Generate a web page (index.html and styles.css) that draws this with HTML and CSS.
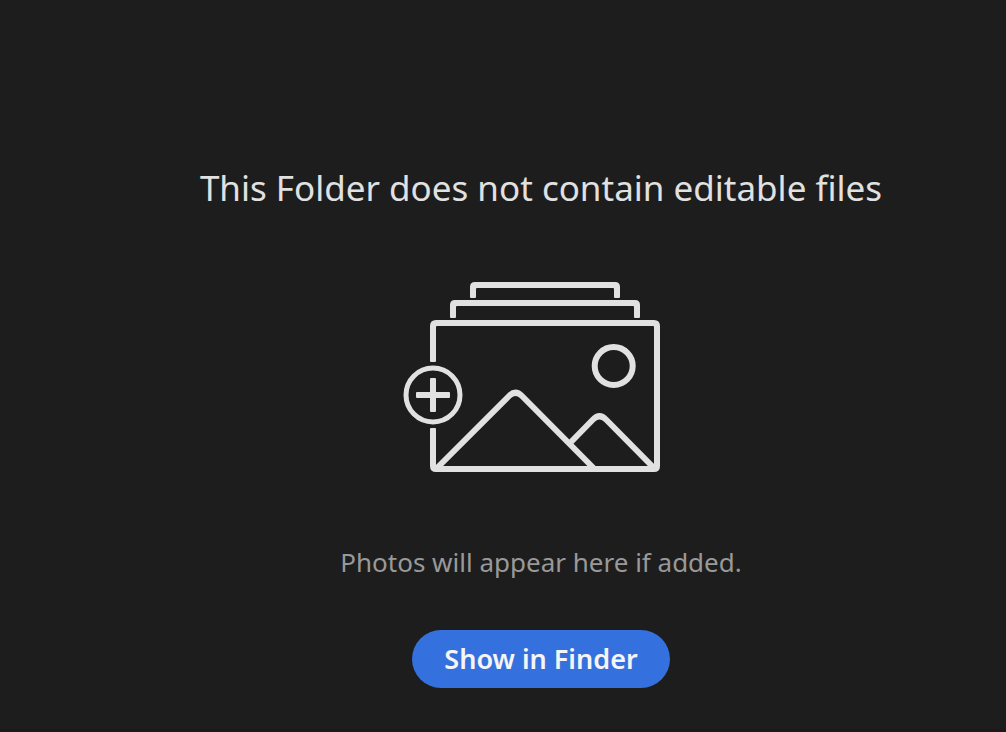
FILE: index.html
```html
<!DOCTYPE html>
<html lang="en">
<head>
    <meta charset="UTF-8">
    <meta name="viewport" content="width=device-width, initial-scale=1.0">
    <title>Empty folder</title>
    <link rel="stylesheet" href="styles.css">
</head>
<body>

<main class="empty-state">
    <h1 class="title">This Folder does not contain editable files</h1>

    <svg class="picture" viewBox="0 0 282 194" aria-hidden="true">
        <!-- stacked photos -->
        <path class="solid" d="M70 17V7q0-5 5-5h140q5 0 5 5v10q0 1-1 1h-4q-1 0-1-1V9q0-1-1-1H77q-1 0-1 1v8q0 1-1 1h-4q-1 0-1-1z"/>
        <path class="solid" d="M50 37V25q0-5 5-5h180q5 0 5 5v12q0 1-1 1h-4q-1 0-1-1V27q0-1-1-1H57q-1 0-1 1v10q0 1-1 1h-4q-1 0-1-1z"/>
        <path class="solid" d="M30 81V46q0-6 6-6h218q6 0 6 6v140q0 6-6 6H36q-6 0-6-6v-37q0-1 1-1h4q1 0 1 1v37h218V47q0-1-1-1H37q-1 0-1 1v34q0 1-1 1h-4q-1 0-1-1z"/>
        <!-- mountains and sun -->
        <path class="line" d="M36.500 188.500L109 116q6.500-6.500 13 0L194 188.500"/>
        <path class="line" d="M171 162L193 139.500q6.500-6.500 13 0L254 188"/>
        <circle class="line" cx="213.700" cy="86" r="19"/>
        <!-- add badge -->
        <circle class="line thin" cx="33" cy="115" r="27"/>
        <rect class="solid" x="16" y="112" width="34" height="6" rx="1"/>
        <rect class="solid" x="30" y="98" width="6" height="34" rx="1"/>
    </svg>

    <p class="hint">Photos will appear here if added.</p>

    <button class="finder-button" type="button">Show in Finder</button>
</main>

</body>
</html>
```

FILE: styles.css
```css
* {
    box-sizing: border-box;
}
body {
    margin: 0;
    background-color: #1d1d1d;
    color: #e1e1e1;
    font-family: "Noto Sans", sans-serif;
}
.empty-state {
    display: flex;
    flex-direction: column;
    align-items: center;
    min-height: 100vh;
    padding: 164px 0 40px 76px;
    border-bottom: 3px solid #1e181c;
}
.title {
    margin: 0;
    font-size: 35px;
    font-weight: 400;
    line-height: 48px;
}
.picture {
    width: 282px;
    height: 194px;
    margin-top: 68px;
}
.solid {
    fill: #e1e1e1;
}
.line {
    fill: none;
    stroke: #e1e1e1;
    stroke-width: 6;
}
.thin {
    stroke-width: 5;
}
.hint {
    margin: 68px 0 0;
    color: #999;
    font-size: 26px;
    line-height: 40px;
}
.finder-button {
    height: 58px;
    margin-top: 48px;
    padding: 0 32px 2px;
    border: none;
    border-radius: 29px;
    background-color: #3571de;
    color: #f5f5f5;
    font-family: inherit;
    font-size: 27px;
    font-weight: 600;
    cursor: pointer;
}
```
